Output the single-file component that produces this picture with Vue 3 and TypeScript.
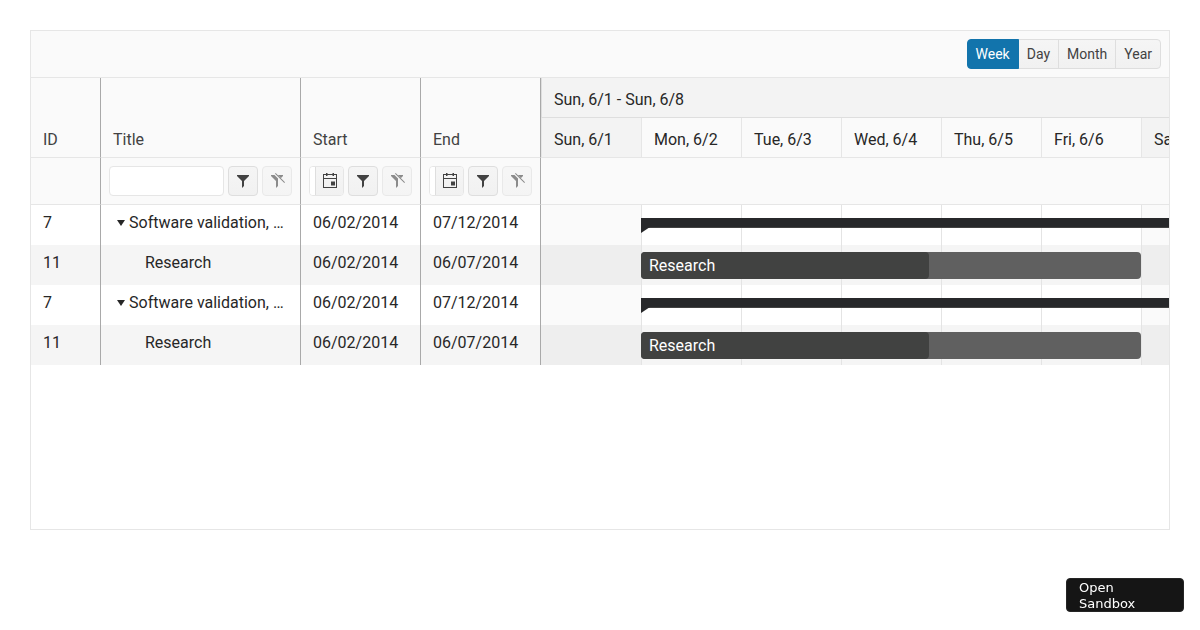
<script setup lang="ts">
import { ref } from 'vue'

interface Task {
  id: number
  title: string
  start: string
  end: string
  summary: boolean
  offset: number
  days: number
  progress: number
}

const DAY_WIDTH = 100

const views = ['Week', 'Day', 'Month', 'Year']
const activeView = ref('Week')

const days = [
  { label: 'Sun, 6/1', weekend: true },
  { label: 'Mon, 6/2', weekend: false },
  { label: 'Tue, 6/3', weekend: false },
  { label: 'Wed, 6/4', weekend: false },
  { label: 'Thu, 6/5', weekend: false },
  { label: 'Fri, 6/6', weekend: false },
  { label: 'Sat, 6/7', weekend: true },
]

const validation: Task = {
  id: 7,
  title: 'Software validation, …',
  start: '06/02/2014',
  end: '07/12/2014',
  summary: true,
  offset: 1,
  days: 40,
  progress: 0,
}
const research: Task = {
  id: 11,
  title: 'Research',
  start: '06/02/2014',
  end: '06/07/2014',
  summary: false,
  offset: 1,
  days: 5,
  progress: 57.6,
}
const tasks: Task[] = [validation, research, validation, research]

const titleFilter = ref('')
const dateFilters = ref([
  { name: 'Start', value: '' },
  { name: 'End', value: '' },
])

function place(task: Task) {
  return {
    left: `${task.offset * DAY_WIDTH}px`,
    width: `${task.days * DAY_WIDTH}px`,
  }
}
</script>

<template>
  <main class="page">
    <section class="gantt">
      <header class="toolbar">
        <div class="views" role="group" aria-label="View">
          <button
            v-for="view in views"
            :key="view"
            type="button"
            class="view"
            :class="{ active: view === activeView }"
            :aria-pressed="view === activeView"
            @click="activeView = view"
          >{{ view }}</button>
        </div>
      </header>

      <div class="content">
        <table class="list">
          <colgroup>
            <col class="col-id" />
            <col class="col-title" />
            <col class="col-date" />
            <col class="col-date" />
          </colgroup>
          <thead>
            <tr class="head">
              <th scope="col">ID</th>
              <th scope="col">Title</th>
              <th scope="col">Start</th>
              <th scope="col">End</th>
            </tr>
            <tr class="filters">
              <td></td>
              <td>
                <div class="filter">
                  <input v-model="titleFilter" class="text" type="text" aria-label="Title filter" />
                  <button type="button" class="tool" aria-label="Title filter operator">
                    <svg viewBox="0 0 16 16"><path d="M2 2h12v1L9 8v5l-2 2V8L2 3z" /></svg>
                  </button>
                  <button type="button" class="tool" aria-label="Clear title filter" disabled>
                    <svg viewBox="0 0 16 16"><path d="M2 2h3.500L9 5.500V13l-2 2V8L2 3zM9 2h5v1l-2 2zM6 .7l.7-.7 9.300 9.300-.7.7z" /></svg>
                  </button>
                </div>
              </td>
              <td v-for="filter in dateFilters" :key="filter.name">
                <div class="filter">
                  <div class="picker">
                    <input v-model="filter.value" type="text" :aria-label="`${filter.name} filter`" />
                    <button type="button" :aria-label="`Choose ${filter.name} date`">
                      <svg viewBox="0 0 16 16"><path fill-rule="evenodd" d="M1 1h14v14H1zM2 2v3h12V2zM2 6v8h12V6z" /><path d="M4 0h1.500v3H4zM10.500 0H12v3h-1.500zM9 8.500h4v4H9z" /></svg>
                    </button>
                  </div>
                  <button type="button" class="tool" :aria-label="`${filter.name} filter operator`">
                    <svg viewBox="0 0 16 16"><path d="M2 2h12v1L9 8v5l-2 2V8L2 3z" /></svg>
                  </button>
                  <button type="button" class="tool" :aria-label="`Clear ${filter.name} filter`" disabled>
                    <svg viewBox="0 0 16 16"><path d="M2 2h3.500L9 5.500V13l-2 2V8L2 3zM9 2h5v1l-2 2zM6 .7l.7-.7 9.300 9.300-.7.7z" /></svg>
                  </button>
                </div>
              </td>
            </tr>
          </thead>
          <tbody>
            <tr v-for="(task, i) in tasks" :key="i" class="row">
              <td>{{ task.id }}</td>
              <td>
                <div class="title" :class="{ child: !task.summary }">
                  <button v-if="task.summary" type="button" class="toggle" aria-label="Collapse">
                    <svg viewBox="0 0 8 6"><path d="M0 0h8L4 6z" /></svg>
                  </button>
                  <span class="name">{{ task.title }}</span>
                </div>
              </td>
              <td>{{ task.start }}</td>
              <td>{{ task.end }}</td>
            </tr>
          </tbody>
        </table>

        <div class="timeline">
          <table class="schedule">
            <thead>
              <tr class="range">
                <th :colspan="days.length" scope="colgroup">Sun, 6/1 - Sun, 6/8</th>
              </tr>
              <tr class="days">
                <th v-for="day in days" :key="day.label" scope="col" :class="{ weekend: day.weekend }">{{ day.label }}</th>
              </tr>
              <tr class="spacer">
                <td :colspan="days.length"></td>
              </tr>
            </thead>
            <tbody>
              <tr v-for="(task, i) in tasks" :key="i" class="row">
                <td v-for="(day, d) in days" :key="day.label" :class="{ weekend: day.weekend, first: d === 0 }">
                  <template v-if="d === 0">
                    <div v-if="task.summary" class="summary" :style="place(task)"></div>
                    <div v-else class="task" :style="place(task)">
                      <div class="done" :style="{ width: `${task.progress}%` }">{{ task.title }}</div>
                    </div>
                  </template>
                </td>
              </tr>
            </tbody>
          </table>
        </div>
      </div>
    </section>

    <button type="button" class="sandbox">Open<br />Sandbox</button>
  </main>
</template>

<style>
body {
  margin: 0;
  background: #fff;
}
</style>

<style scoped>
* {
  box-sizing: border-box;
}

.page {
  min-height: 100vh;
  padding: 30px 30px 100px;
  display: flex;
  flex-direction: column;
  font: 16px/24px Roboto, "Liberation Sans", sans-serif;
  color: #272727;
}

button,
input {
  margin: 0;
  padding: 0;
  border: 0;
  font: inherit;
  color: inherit;
}

svg {
  display: block;
  width: 16px;
  height: 16px;
  fill: currentColor;
}

.gantt {
  flex: 1;
  border: 1px solid #e6e6e6;
  background: #fff;
}

.toolbar {
  display: flex;
  justify-content: flex-end;
  padding: 8px;
  border-bottom: 1px solid #e6e6e6;
  background: #fafafa;
}

.views {
  display: flex;
}

.view {
  height: 30px;
  margin-left: -1px;
  padding: 0 8px;
  border: 1px solid #dedede;
  background: linear-gradient(#f5f5f5, #f1f1f1);
  font-size: 14px;
  line-height: 20px;
  color: #424242;
}

.view:first-child {
  border-radius: 4px 0 0 4px;
}

.view:last-child {
  border-radius: 0 4px 4px 0;
}

.view.active {
  position: relative;
  border-color: #1274ac;
  background: #1274ac;
  color: #fff;
}

.content {
  display: flex;
}

table {
  border-collapse: separate;
  border-spacing: 0;
  table-layout: fixed;
}

th,
td {
  padding: 0;
  text-align: left;
  font-weight: 400;
}

.list {
  flex: none;
  width: 510px;
}

.col-id {
  width: 70px;
}

.col-title {
  width: 200px;
}

.col-date {
  width: 120px;
}

.list th,
.list td {
  border-right: 1px solid #a9a9a9;
}

.head th {
  height: 80px;
  padding: 0 12px 5px;
  border-bottom: 1px solid #e6e6e6;
  background: #fafafa;
  vertical-align: bottom;
  color: #424242;
}

.filters td {
  height: 47px;
  padding: 0 8px;
  border-bottom: 1px solid #e6e6e6;
  background: #fafafa;
}

.filter {
  display: flex;
  gap: 4px;
}

.text,
.picker {
  flex: 1;
  min-width: 0;
  height: 30px;
  border: 1px solid #e6e6e6;
  border-radius: 4px;
  background: #fff;
}

.text {
  padding: 0 8px;
}

.picker {
  display: flex;
  overflow: hidden;
}

.picker input {
  flex: 1;
  width: 0;
  min-width: 0;
}

.picker button {
  flex: none;
  width: 28px;
  border-left: 1px solid #dedede;
}

.tool {
  flex: none;
  width: 30px;
  height: 30px;
  border: 1px solid #dedede;
  border-radius: 4px;
}

.tool,
.picker button {
  display: flex;
  align-items: center;
  justify-content: center;
  background: linear-gradient(#f5f5f5, #f1f1f1);
  color: #424242;
}

.tool:disabled {
  opacity: 0.6;
}

.row td {
  height: 40px;
}

.list .row td {
  padding: 0 12px 4px;
}

.row:nth-child(even) td {
  background: #f5f5f5;
}

.title {
  display: flex;
  align-items: center;
  padding-left: 4px;
}

.title.child {
  padding-left: 32px;
}

.toggle {
  flex: none;
  width: 12px;
  background: none;
}

.toggle svg {
  width: 8px;
  height: 6px;
}

.name {
  min-width: 0;
  overflow: hidden;
  text-overflow: ellipsis;
  white-space: nowrap;
}

.timeline {
  flex: 1;
  min-width: 0;
  overflow: hidden;
}

.schedule {
  width: 700px;
  min-width: 100%;
}

.schedule th {
  height: 40px;
  padding: 4px 12px 0;
  border-left: 1px solid #e6e6e6;
  border-bottom: 1px solid #e6e6e6;
  background: #fafafa;
}

.schedule .range th {
  border-color: #dedede;
  background: #f3f3f3;
}

.schedule .days .weekend {
  background: #f3f3f3;
}

.spacer td {
  height: 47px;
  border-bottom: 1px solid #e6e6e6;
  background: #fafafa;
}

.schedule .row td {
  border-left: 1px solid #e4e4e4;
}

.schedule .row .weekend {
  background: #fafafa;
}

.schedule .row:nth-child(even) .weekend {
  background: #eee;
}

.schedule .row .first {
  border-left: 0;
}

.row {
  position: relative;
}

.summary {
  position: absolute;
  top: 13px;
  height: 10px;
  border-bottom: 1px solid #424242;
  background: #27282a;
}

.summary::before {
  content: "";
  position: absolute;
  top: 9px;
  left: 0;
  width: 9px;
  height: 6px;
  background: #27282a;
  clip-path: polygon(0 0, 100% 0, 0 100%);
}

.task {
  position: absolute;
  top: 7px;
  height: 27px;
  border-radius: 4px;
  overflow: hidden;
  background: #606060;
}

.done {
  height: 27px;
  padding: 0 8px;
  border-radius: 0 4px 4px 0;
  background: #414241;
  line-height: 27px;
  color: #fff;
}

.sandbox {
  position: fixed;
  right: 16px;
  bottom: 18px;
  width: 118px;
  padding: 1px 12px 0;
  height: 34px;
  border: 1px solid #252525;
  border-radius: 4px;
  background: #151515;
  font: 13px/16px "DejaVu Sans", sans-serif;
  text-align: left;
  color: #fff;
}
</style>
